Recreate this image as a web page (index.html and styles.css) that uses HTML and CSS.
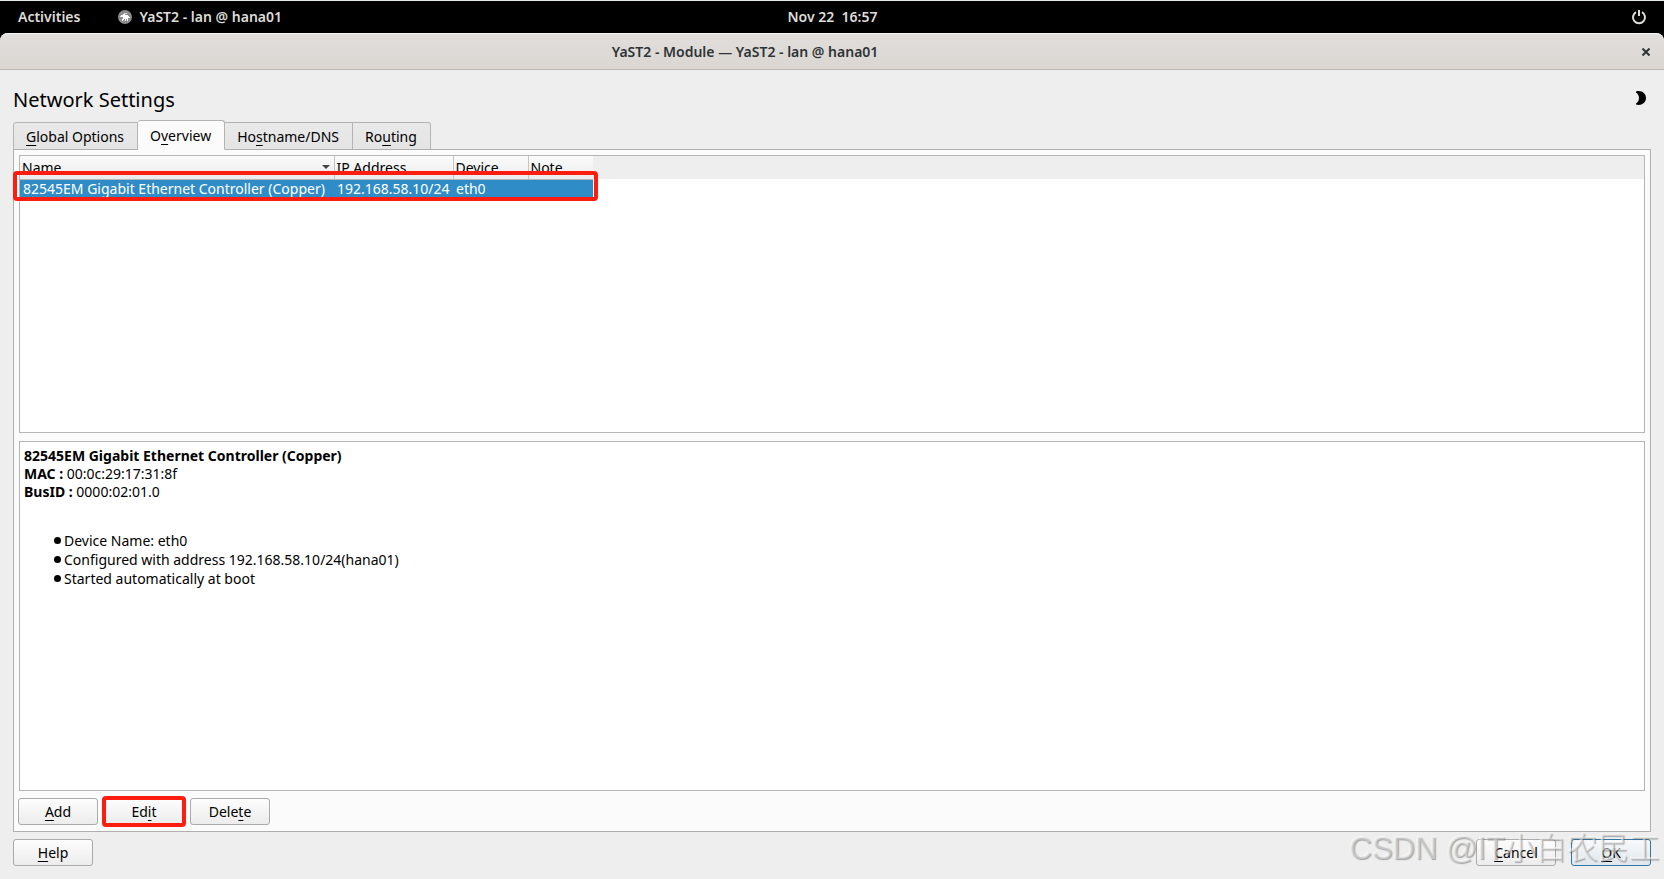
FILE: index.html
```
<!DOCTYPE html>
<html lang="en">
<head>
  <meta charset="UTF-8" />
  <title>YaST2 - lan @ hana01</title>
  <meta name="viewport" content="width=device-width, initial-scale=1.0" />
  <link rel="stylesheet" href="styles.css">
</head>
<body>
  <header class="topbar">
    <div class="topbar-left">
      <a href="#">Activities</a>
      <a href="#" class="app-menu">
        <svg width="14" height="14" viewBox="0 0 14 14" aria-hidden="true">
          <circle cx="7" cy="7" r="7" fill="#8c8c8c" />
          <path d="M3 5h2V4h2v1h3v1h1v1h1v1h-2v3H9V9H8v2H7V9H6v1H5v1H4V9h1V7H3z" fill="#fff" />
          <path d="M6 3h3v1H6zM2 6h1v1H2z" fill="#ddd" />
        </svg>
        YaST2 - lan @ hana01
      </a>
    </div>
    <time class="clock">Nov 22&nbsp; 16:57</time>
    <div class="topbar-right">
      <svg width="16" height="16" viewBox="0 0 16 16" fill="none" stroke="#deddda" stroke-width="2" aria-hidden="true">
        <path d="M5 3.1a6 6 0 1 0 6 0M8 1v6" />
      </svg>
    </div>
  </header>

  <div class="window">
    <div class="titlebar">
      <span class="window-title">YaST2 - Module — YaST2 - lan @ hana01</span>
      <button class="close" aria-label="Close">
        <svg width="8" height="8" viewBox="0 0 8 8" stroke="#2e3436" stroke-width="2" aria-hidden="true">
          <path d="M0.5 0.5l7 7M7.5 0.5l-7 7" />
        </svg>
      </button>
    </div>

    <main class="content">
      <div class="heading">
        <h1>Network Settings</h1>
        <svg width="11" height="14" viewBox="0 0 11 14" aria-hidden="true">
          <path d="M1 0.5C6-1 11 2 11 7s-5 8-10 6.500V12.500C5 10 5 4 1 1.500z" />
        </svg>
      </div>

      <nav class="tabs">
        <button class="tab"><u>G</u>lobal Options</button>
        <button class="tab active">O<u>v</u>erview</button>
        <button class="tab">Ho<u>s</u>tname/DNS</button>
        <button class="tab">Ro<u>u</u>ting</button>
      </nav>

      <section class="panel">
        <div class="device-list">
          <table>
            <thead>
              <tr>
                <th class="col-name">Name <span class="sort"></span></th>
                <th class="col-ip">IP Address</th>
                <th class="col-device">Device</th>
                <th class="col-note">Note</th>
              </tr>
            </thead>
            <tbody>
              <tr class="selected">
                <td>82545EM Gigabit Ethernet Controller (Copper)</td>
                <td>192.168.58.10/24</td>
                <td>eth0</td>
                <td></td>
              </tr>
            </tbody>
          </table>
          <div class="marker row-marker"></div>
        </div>

        <div class="details">
          <p><b>82545EM Gigabit Ethernet Controller (Copper)</b></p>
          <p><b>MAC :</b> 00:0c:29:17:31:8f</p>
          <p><b>BusID :</b> 0000:02:01.0</p>
          <ul>
            <li>Device Name: eth0</li>
            <li>Configured with address 192.168.58.10/24(hana01)</li>
            <li>Started automatically at boot</li>
          </ul>
        </div>

        <div class="actions">
          <button class="btn"><u>A</u>dd</button>
          <div class="marked">
            <button class="btn">Ed<u>i</u>t</button>
            <div class="marker button-marker"></div>
          </div>
          <button class="btn">Dele<u>t</u>e</button>
        </div>
      </section>

      <footer class="footer">
        <button class="btn"><u>H</u>elp</button>
        <div class="footer-right">
          <button class="btn"><u>C</u>ancel</button>
          <button class="btn default"><u>O</u>K</button>
        </div>
        <div class="watermark">CSDN @IT小白农民工</div>
      </footer>
    </main>
  </div>
</body>
</html>
```
FILE: styles.css
```
* {
  box-sizing: border-box;
  margin: 0;
  padding: 0;
}
body {
  min-height: 100vh;
  display: flex;
  flex-direction: column;
  background: #000;
  color: #000;
  border-top: 1px solid #e4ece9;
  font-family: "Noto Sans", "Noto Sans CJK SC", sans-serif;
  font-size: 14px;
  line-height: 18px;
}
button {
  font: inherit;
  color: inherit;
}
u {
  text-underline-offset: 3px;
  text-decoration-skip-ink: none;
}

/* top bar */
.topbar {
  height: 32px;
  padding: 0 17px 0 18px;
  display: grid;
  grid-template-columns: 1fr auto 1fr;
  align-items: center;
  color: #deddda;
  font-weight: 600;
}
.topbar a {
  color: inherit;
  text-decoration: none;
}
.topbar-left {
  display: flex;
  gap: 38px;
}
.app-menu {
  display: flex;
  align-items: center;
  gap: 7px;
}
.topbar-right {
  display: flex;
  justify-content: flex-end;
}

/* window */
.window {
  flex: 1;
  display: flex;
  flex-direction: column;
  background: #eee;
  border-radius: 8px 8px 0 0;
}
.titlebar {
  height: 37px;
  padding: 0 14px;
  display: grid;
  grid-template-columns: 1fr auto 1fr;
  align-items: center;
  background: linear-gradient(#e1dedb, #dad6d2);
  border-top: 1px solid #f5f4f3;
  border-bottom: 1px solid #bfb8b1;
  border-radius: 8px 8px 0 0;
  color: #2e3436;
  font-weight: 600;
}
.window-title {
  grid-column: 2;
  margin-right: 174px;
}
.close {
  justify-self: end;
  display: flex;
  background: none;
  border: none;
}
.content {
  flex: 1;
  display: flex;
  flex-direction: column;
  padding: 15px 13px 13px;
}
.heading {
  display: flex;
  justify-content: space-between;
  padding-right: 5px;
}
.heading h1 {
  font-size: 20px;
  font-weight: 400;
  line-height: 30px;
}
.heading svg {
  margin-top: 6px;
}

/* tabs */
.tabs {
  display: flex;
  align-items: flex-end;
  margin-top: 5px;
  height: 30px;
}
.tab {
  height: 28px;
  padding: 1px 13px 0 12px;
  background: linear-gradient(#e9e9e9, #e4e4e4);
  border: 1px solid #b4b4b4;
  border-left: none;
}
.tab:first-child {
  border-left: 1px solid #b4b4b4;
  border-top-left-radius: 3px;
}
.tab:last-child {
  border-top-right-radius: 3px;
}
.tab.active {
  position: relative;
  height: 30px;
  background: #fbfbfb;
  border-bottom-color: #fbfbfb;
  border-radius: 3px 3px 0 0;
}
.panel {
  flex: 1;
  display: flex;
  flex-direction: column;
  margin-top: -1px;
  padding: 5px 5px 6px;
  background: #fbfbfb;
  border: 1px solid #b0b0b0;
}

/* device list */
.device-list {
  position: relative;
  flex: 9 0 0;
  background: linear-gradient(#eee, #eee) top / 100% 23px no-repeat #fff;
  border: 1px solid #b6b6b6;
}
table {
  width: 573px;
  table-layout: fixed;
  border-collapse: collapse;
}
th {
  height: 23px;
  padding: 2px 0 0 2px;
  text-align: left;
  font-weight: 400;
  background: linear-gradient(#fbfbfb, #eaeaea);
  border-right: 1px solid #c4c4c4;
  border-bottom: 1px solid #b6b6b6;
}
th:last-child {
  border-right: none;
}
.col-name {
  width: 314px;
}
.col-ip {
  width: 119px;
}
.col-device {
  width: 75px;
}
.sort {
  float: right;
  margin: 6px 4px 0 0;
  border: 4px solid transparent;
  border-top-color: #444;
  border-bottom: none;
}
td {
  height: 19px;
  padding-left: 3px;
  line-height: 18px;
  vertical-align: top;
  white-space: nowrap;
}
.selected {
  background: #308cc6;
  color: #fff;
}

/* red frames round the things to click */
.marker {
  position: absolute;
  border: 4px solid #ff1d10;
  border-radius: 4px;
  pointer-events: none;
}
.row-marker {
  top: 15px;
  left: -7px;
  width: 585px;
  height: 30px;
}
.marked {
  position: relative;
}
.button-marker {
  inset: -2px;
}

/* details */
.details {
  flex: 11 0 0;
  margin-top: 8px;
  padding: 5px 4px;
  background: #fff;
  border: 1px solid #b6b6b6;
}
.details ul {
  margin-top: 30px;
  padding-left: 30px;
  list-style: none;
}
.details li {
  display: flex;
  align-items: center;
  gap: 3px;
  line-height: 19px;
}
.details li::before {
  content: "";
  width: 7px;
  height: 7px;
  border-radius: 50%;
  background: #000;
}

/* buttons */
.btn {
  display: block;
  width: 80px;
  height: 27px;
  background: linear-gradient(#fdfdfd, #ececec);
  border: 1px solid #ababab;
  border-radius: 3px;
}
.btn.default {
  background: linear-gradient(#f8fafc, #dfe6ec);
  border-color: #2f77a5;
}
.actions {
  display: flex;
  gap: 6px;
  margin: 7px 0 0 -1px;
}
.footer {
  position: relative;
  display: flex;
  justify-content: space-between;
  margin-top: 7px;
}
.footer-right {
  display: flex;
  gap: 15px;
}
.watermark {
  position: absolute;
  right: -9px;
  top: -10px;
  color: rgba(225, 225, 225, 0.5);
  font-family: "Liberation Sans", "Noto Sans CJK SC", sans-serif;
  font-size: 31px;
  font-weight: 300;
  line-height: 40px;
  white-space: nowrap;
  text-shadow: 1px 1px 1px rgba(90, 90, 90, 0.5), -1px -1px 0 rgba(255, 255, 255, 0.5);
  pointer-events: none;
}
```
